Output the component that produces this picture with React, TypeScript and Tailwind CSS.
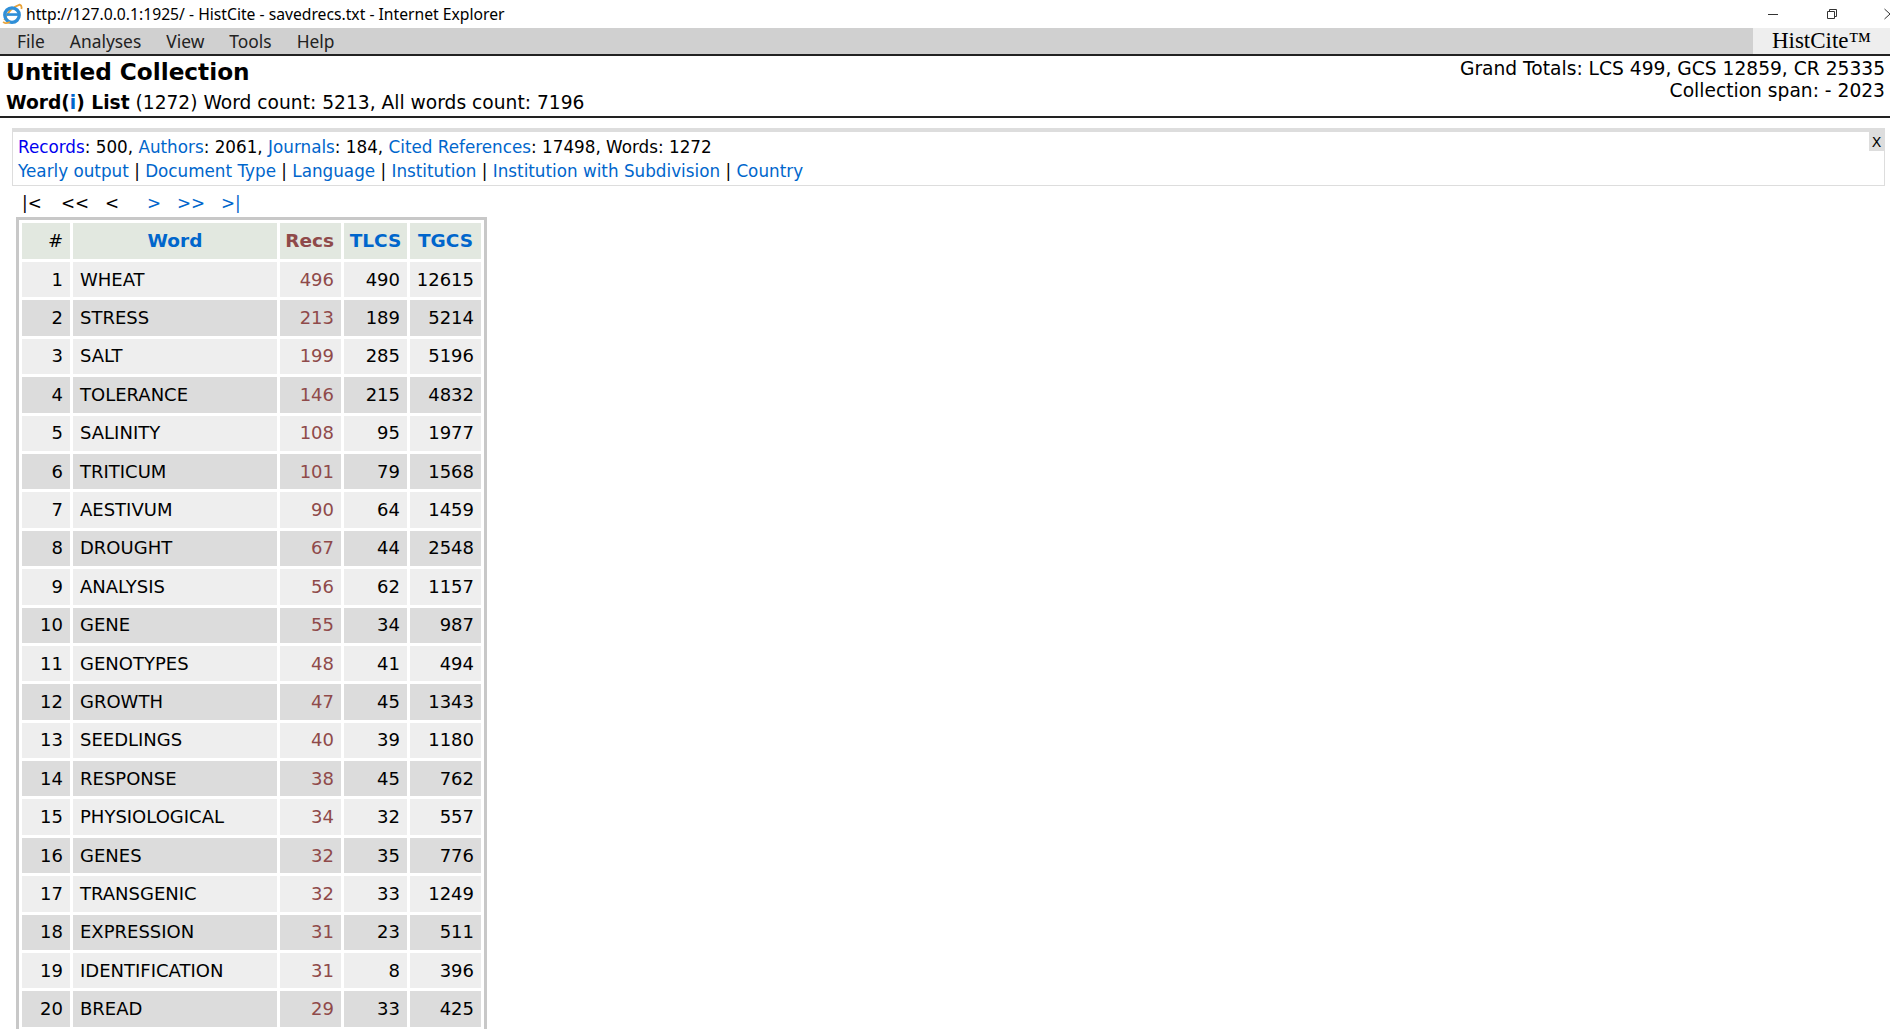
const rows: [number, string, number, number, number][] = [
  [1, "WHEAT", 496, 490, 12615],
  [2, "STRESS", 213, 189, 5214],
  [3, "SALT", 199, 285, 5196],
  [4, "TOLERANCE", 146, 215, 4832],
  [5, "SALINITY", 108, 95, 1977],
  [6, "TRITICUM", 101, 79, 1568],
  [7, "AESTIVUM", 90, 64, 1459],
  [8, "DROUGHT", 67, 44, 2548],
  [9, "ANALYSIS", 56, 62, 1157],
  [10, "GENE", 55, 34, 987],
  [11, "GENOTYPES", 48, 41, 494],
  [12, "GROWTH", 47, 45, 1343],
  [13, "SEEDLINGS", 40, 39, 1180],
  [14, "RESPONSE", 38, 45, 762],
  [15, "PHYSIOLOGICAL", 34, 32, 557],
  [16, "GENES", 32, 35, 776],
  [17, "TRANSGENIC", 32, 33, 1249],
  [18, "EXPRESSION", 31, 23, 511],
  [19, "IDENTIFICATION", 31, 8, 396],
  [20, "BREAD", 29, 33, 425],
];

const links = ["Yearly output", "Document Type", "Language", "Institution", "Institution with Subdivision", "Country"];

function IeIcon() {
  return (
    <svg width="22" height="22" viewBox="0 0 20 20" className="ml-[1px]">
      <path d="M3 15.5C6 8 11 3.5 17 1.5c1.5.5 2 2 1.5 4" fill="none" stroke="#e8a33a" strokeWidth="1.6" />
      <circle cx="10" cy="11" r="6.6" fill="none" stroke="#2f8fd8" strokeWidth="3" />
      <path d="M5 10.5h10.5" stroke="#2f8fd8" strokeWidth="2.4" />
      <path d="M2 17c1 1.6 3.5 1.4 6 .2" fill="none" stroke="#e8a33a" strokeWidth="1.5" />
    </svg>
  );
}

export default function App() {
  return (
    <div className="h-[1029px] overflow-hidden bg-white text-[18px] leading-[22px] text-black font-['DejaVu_Sans',sans-serif]">
      {/* window title bar */}
      <div className="flex h-[28px] items-center gap-[3px] overflow-hidden">
        <IeIcon />
        <span className="font-['Noto_Sans',sans-serif] text-[15.7px]">http://127.0.0.1:1925/ - HistCite - savedrecs.txt - Internet Explorer</span>
        <div className="ml-auto flex items-center">
          <svg width="12" height="12" viewBox="0 0 12 12" className="mr-[47px]"><path d="M1 6.5h10" stroke="#333" /></svg>
          <svg width="12" height="12" viewBox="0 0 12 12" className="mr-[46px]">
            <path d="M3.5 3V1.5h7v7H8.5M1.5 3.5h7v7h-7z" fill="none" stroke="#333" />
          </svg>
          <svg width="6" height="12" viewBox="0 0 6 12"><path d="M.5 1l5.5 5M.5 11l5.5-5" fill="none" stroke="#333" /></svg>
        </div>
      </div>

      {/* menu */}
      <div className="flex h-[28px] items-stretch border-b-2 border-[#222] bg-[#d0d0d0]">
        <div className="flex items-center gap-[25px] pl-[17px] font-['Noto_Sans',sans-serif] text-[17.4px] text-[#222]">
          <span>File</span>
          <span>Analyses</span>
          <span>View</span>
          <span>Tools</span>
          <span>Help</span>
        </div>
        <div className="ml-auto flex w-[137px] items-center justify-center bg-[#eeeeee] font-['Liberation_Serif',serif] text-[23px]">HistCite™</div>
      </div>

      {/* heading */}
      <div className="flex h-[61.5px] justify-between border-b-2 border-[#222] pl-[6px] pr-[5px] text-[18.66px]">
        <div>
          <div className="mt-[1px] text-[23.2px] font-bold leading-[30px]">Untitled Collection</div>
          <div className="mt-[5px]">
            <b>Word(<span className="text-[#0066cc]">i</span>) List</b> (1272) Word count: 5213, All words count: 7196
          </div>
        </div>
        <div className="pt-[1.5px] text-right">
          <div className="leading-[22px]">Grand Totals: LCS 499, GCS 12859, CR 25335</div>
          <div className="leading-[22px]">Collection span: - 2023</div>
        </div>
      </div>

      {/* summary box */}
      <div className="relative ml-[12px] mr-[5px] mt-[10.5px] h-[58px] border border-t-4 border-[#dddddd] pl-[5px] pt-[3.5px] text-[16.8px]">
        <div className="h-[24px]">
          <span className="text-[#0000ee]">Records</span>: 500, <span className="text-[#0066cc]">Authors</span>: 2061,{" "}
          <span className="text-[#0066cc]">Journals</span>: 184, <span className="text-[#0066cc]">Cited References</span>: 17498, Words: 1272
        </div>
        <div>
          {links.map((l, i) => (
            <span key={l}>
              {i > 0 && " | "}
              <span className="text-[#0066cc]">{l}</span>
            </span>
          ))}
        </div>
        <div className="absolute right-0 top-0 flex h-[19px] w-[15px] items-center justify-center bg-[#dddddd] text-[14px]">X</div>
      </div>

      {/* pager */}
      <div className="ml-[22px] mt-[6px] flex h-[22px] items-center text-[16.8px]">
        <span className="w-[39px]">|&lt;</span>
        <span className="w-[44px]">&lt;&lt;</span>
        <span className="w-[42px]">&lt;</span>
        <span className="w-[30px] text-[#0066cc]">&gt;</span>
        <span className="w-[44px] text-[#0066cc]">&gt;&gt;</span>
        <span className="text-[#0066cc]">&gt;|</span>
      </div>

      {/* word table */}
      <table className="ml-[16px] mt-[3px] w-[470px] table-fixed border-separate border-spacing-[3px] border-[3px] border-[#c8c8c8]">
        <thead>
          <tr className="h-[36px] bg-[#e2e8e0]">
            <th className="w-[48px] pr-[7px] text-right font-normal">#</th>
            <th className="w-[204px] text-[18.5px] font-bold text-[#0066cc]">Word</th>
            <th className="w-[61px] pr-[7px] text-right text-[18.5px] font-bold text-[#8f4a4a]">Recs</th>
            <th className="w-[63px] text-center text-[18.5px] font-bold text-[#0066cc]">TLCS</th>
            <th className="w-[71px] text-center text-[18.5px] font-bold text-[#0066cc]">TGCS</th>
          </tr>
        </thead>
        <tbody>
          {rows.map(([n, word, recs, tlcs, tgcs]) => (
            <tr key={n} className={n % 2 ? "h-[35.4px] bg-[#eeeeee]" : "h-[35.4px] bg-[#dcdcdc]"}>
              <td className="pr-[7px] text-right">{n}</td>
              <td className="pl-[7px]">{word}</td>
              <td className="pr-[7px] text-right text-[#8f4a4a]">{recs}</td>
              <td className="pr-[7px] text-right">{tlcs}</td>
              <td className="pr-[7px] text-right">{tgcs}</td>
            </tr>
          ))}
          <tr className="h-[35.4px] bg-[#eeeeee]">
            <td colSpan={5} />
          </tr>
        </tbody>
      </table>
    </div>
  );
}
